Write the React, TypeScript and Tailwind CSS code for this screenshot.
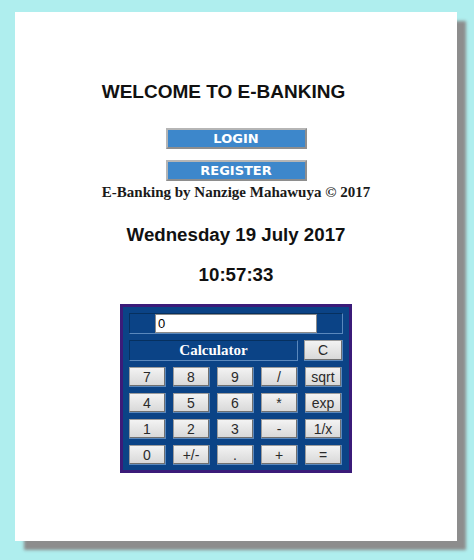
import { useState } from "react";

const rows = [
  ["7", "8", "9", "/", "sqrt"],
  ["4", "5", "6", "*", "exp"],
  ["1", "2", "3", "-", "1/x"],
  ["0", "+/-", ".", "+", "="],
];

function CalcButton({ label, onClick }: { label: string; onClick?: () => void }) {
  return (
    <div className="h-[20px] border-b border-r border-[#5a88bd]">
      <button
        onClick={onClick}
        className="w-full h-[19px] flex items-center justify-center bg-gradient-to-b from-[#f3f3f3] to-[#d9d9d9] border border-[#9c9c9c] border-b-[#6f6f6f] border-r-[#6f6f6f] text-[14px] leading-none text-[#2a2a2a] font-['Liberation_Sans',Arial,sans-serif]"
      >
        {label}
      </button>
    </div>
  );
}

export default function App() {
  const [display, setDisplay] = useState("0");

  const press = (key: string) => {
    if (/^[0-9]$/.test(key)) {
      setDisplay((d) => (d === "0" ? key : d + key));
    } else if (key === ".") {
      setDisplay((d) => (d.includes(".") ? d : d + "."));
    } else if (key === "+/-") {
      setDisplay((d) => (d.startsWith("-") ? d.slice(1) : d === "0" ? d : "-" + d));
    } else if (key === "sqrt") {
      setDisplay((d) => String(Math.sqrt(parseFloat(d))));
    } else if (key === "exp") {
      setDisplay((d) => String(Math.exp(parseFloat(d))));
    } else if (key === "1/x") {
      setDisplay((d) => String(1 / parseFloat(d)));
    } else if (key === "=") {
      setDisplay((d) => {
        try {
          // eslint-disable-next-line no-new-func
          return String(Function(`return (${d})`)());
        } catch {
          return "0";
        }
      });
    } else {
      setDisplay((d) => d + key);
    }
  };

  return (
    <div className="min-h-screen bg-[#afeeee] pt-[12px] pl-[15px]">
      <div className="w-[442px] h-[529px] bg-white shadow-[9px_9px_3px_#8d8d8d] flex flex-col items-center pt-[68px]">
        <h2 className="pr-[25px] text-[19px] leading-[23px] font-bold text-[#111] font-['Liberation_Sans',Arial,sans-serif]">
          WELCOME TO E-BANKING
        </h2>

        <button className="mt-[25px] w-[141px] h-[21px] bg-[#3d87cb] border-2 border-[#b5b5b5] border-b-[#8e8e8e] border-r-[#8e8e8e] text-white text-[13px] leading-none font-bold font-['DejaVu_Sans',Verdana,sans-serif]">
          LOGIN
        </button>
        <button className="mt-[11px] w-[141px] h-[21px] bg-[#3d87cb] border-2 border-[#b5b5b5] border-b-[#8e8e8e] border-r-[#8e8e8e] text-white text-[13px] leading-none font-bold font-['DejaVu_Sans',Verdana,sans-serif]">
          REGISTER
        </button>

        <p className="mt-[2px] text-[15px] leading-[18px] font-bold text-[#1a1a1a] font-['Liberation_Serif','Times_New_Roman',serif]">
          E-Banking by Nanzige Mahawuya © 2017
        </p>

        <h3 className="mt-[23px] text-[18.7px] leading-[22px] font-bold text-[#111] font-['Liberation_Sans',Arial,sans-serif]">
          Wednesday 19 July 2017
        </h3>
        <h3 className="mt-[18px] text-[18.7px] leading-[22px] font-bold text-[#111] font-['Liberation_Sans',Arial,sans-serif]">
          10:57:33
        </h3>

        <div className="mt-[18px] w-[232px] border-[3px] border-[#3b1b79] bg-[#0b4386] px-[6px] pt-[6px] pb-[5px] flex flex-col gap-[6px]">
          <div className="h-[21px] flex items-center justify-center border border-t-[#06305f] border-l-[#06305f] border-b-[#5a88bd] border-r-[#5a88bd]">
            <input
              value={display}
              onChange={(e) => setDisplay(e.target.value)}
              className="w-[162px] h-[19px] bg-white border border-[#8a8a8a] px-[2px] text-[13px] text-black outline-none font-['Liberation_Sans',Arial,sans-serif]"
            />
          </div>

          <div className="flex gap-[6px]">
            <div className="w-[169px] h-[21px] flex items-center justify-center border border-t-[#06305f] border-l-[#06305f] border-b-[#5a88bd] border-r-[#5a88bd] text-white text-[15px] font-bold font-['Liberation_Serif','Times_New_Roman',serif]">
              Calculator
            </div>
            <div className="w-[39px] h-[21px] border-b border-r border-[#5a88bd]">
              <button
                onClick={() => setDisplay("0")}
                className="w-[38px] h-[20px] flex items-center justify-center bg-gradient-to-b from-[#f3f3f3] to-[#d9d9d9] border border-[#9c9c9c] border-b-[#6f6f6f] border-r-[#6f6f6f] text-[14px] leading-none text-[#2a2a2a] font-['Liberation_Sans',Arial,sans-serif]"
              >
                C
              </button>
            </div>
          </div>

          {rows.map((row, i) => (
            <div key={i} className="grid grid-cols-[37px_37px_37px_37px_37px] gap-x-[7px]">
              {row.map((k) => (
                <CalcButton key={k} label={k} onClick={() => press(k)} />
              ))}
            </div>
          ))}
        </div>
      </div>
    </div>
  );
}
